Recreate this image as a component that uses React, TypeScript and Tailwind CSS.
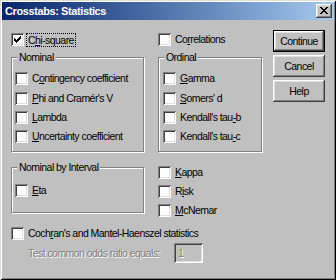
import React from "react";

const FONT = "font-['Liberation_Sans',Arial,sans-serif]";
const TXT = "text-[10.5px] tracking-[-0.55px]";

function Box({ checked }: { checked?: boolean }) {
  return (
    <span className="relative block w-[13px] h-[13px] shrink-0 bg-white shadow-[inset_1px_1px_0_#808080,inset_-1px_-1px_0_#ffffff,inset_2px_2px_0_#404040,inset_-2px_-2px_0_#dfdfdf]">
      {checked && (
        <svg
          className="absolute left-[3px] top-[3px]"
          width="7"
          height="7"
          viewBox="0 0 7 7"
          shapeRendering="crispEdges"
        >
          <path
            d="M6 0h1v1h-1z M5 1h2v1h-2z M0 2h1v1h-1z M4 2h3v1h-3z M0 3h2v1h-2z M3 3h3v1h-3z M0 4h5v1h-5z M1 5h3v1h-3z M2 6h1v1h-1z"
            fill="#000"
          />
        </svg>
      )}
    </span>
  );
}

function Mn({ text, u }: { text: string; u: number }) {
  if (u < 0) return <>{text}</>;
  return (
    <>
      {text.slice(0, u)}
      <u className="underline underline-offset-[1px]">{text[u]}</u>
      {text.slice(u + 1)}
    </>
  );
}

function CB({
  text,
  u,
  checked,
  focus,
}: {
  text: string;
  u: number;
  checked?: boolean;
  focus?: boolean;
}) {
  return (
    <div className="flex items-center h-[13px]">
      <Box checked={checked} />
      {focus ? (
        <span className="ml-[2px] px-[1px] h-[14px] flex items-center border border-dotted border-black text-[10.5px] tracking-[-0.55px] leading-[12px] whitespace-nowrap">
          <Mn text={text} u={u} />
        </span>
      ) : (
        <span className="ml-[4px] text-[10.5px] tracking-[-0.55px] leading-[13px] whitespace-nowrap">
          <Mn text={text} u={u} />
        </span>
      )}
    </div>
  );
}

function Group({
  title,
  className,
  children,
}: {
  title: string;
  className: string;
  children: React.ReactNode;
}) {
  return (
    <div
      className={
        "relative border border-[#808080] shadow-[inset_1px_1px_0_#ffffff,1px_1px_0_#ffffff] " +
        className
      }
    >
      <span className="absolute left-[5px] top-[-7px] px-[2px] bg-[#c0c0c0] text-[10.5px] tracking-[-0.55px] leading-[13px] whitespace-nowrap">
        {title}
      </span>
      {children}
    </div>
  );
}

function Btn({ label, def }: { label: string; def?: boolean }) {
  return (
    <div
      className={
        "w-[52px] h-[22px] flex items-center justify-center text-[10.5px] tracking-[-0.55px] leading-[13px] bg-[#c0c0c0] " +
        (def
          ? "border border-black shadow-[inset_-1px_-1px_0_#404040,inset_1px_1px_0_#ffffff,inset_-2px_-2px_0_#808080,inset_2px_2px_0_#dfdfdf]"
          : "shadow-[inset_-1px_-1px_0_#404040,inset_1px_1px_0_#ffffff,inset_-2px_-2px_0_#808080,inset_2px_2px_0_#dfdfdf]")
      }
    >
      {label}
    </div>
  );
}

export default function App() {
  return (
    <div
      className={
        "w-[336px] h-[280px] bg-[#c0c0c0] text-black p-[2px] overflow-hidden shadow-[inset_1px_1px_0_#dfdfdf,inset_-1px_-1px_0_#000000,inset_2px_2px_0_#ffffff,inset_-2px_-2px_0_#808080] " +
        FONT
      }
    >
      {/* Title bar */}
      <div className="h-[18px] flex items-center justify-between pl-[3px] pr-[2px] bg-gradient-to-r from-[#0a246a] to-[#a6caf0]">
        <span className="text-white font-bold text-[11px] leading-[13px] tracking-[-0.4px]">
          Crosstabs: Statistics
        </span>
        <div className="w-[16px] h-[14px] relative bg-[#c0c0c0] shadow-[inset_-1px_-1px_0_#404040,inset_1px_1px_0_#ffffff,inset_-2px_-2px_0_#808080,inset_2px_2px_0_#dfdfdf]">
          <svg
            className="absolute left-[4px] top-[3px]"
            width="8"
            height="7"
            viewBox="0 0 8 7"
            shapeRendering="crispEdges"
          >
            <path
              d="M0 0h2v1h-2z M6 0h2v1h-2z M1 1h2v1h-2z M5 1h2v1h-2z M2 2h4v1h-4z M3 3h2v1h-2z M2 4h4v1h-4z M1 5h2v1h-2z M5 5h2v1h-2z M0 6h2v1h-2z M6 6h2v1h-2z"
              fill="#000"
            />
          </svg>
        </div>
      </div>

      {/* Client */}
      <div className="flex pl-[9px] pt-[10px]">
        {/* Left column */}
        <div className="w-[251px] pt-[3px] flex flex-col">
          <div className="flex">
            <div className="w-[147px]">
              <CB text="Chi-square" u={1} checked focus />
            </div>
            <CB text="Correlations" u={2} />
          </div>

          <div className="flex mt-[11px]">
            <Group title="Nominal" className="w-[133px] h-[95px] pl-[3px] pt-[14px]">
              <div className="flex flex-col">
                <CB text="Contingency coefficient" u={1} />
                <div className="mt-[7px]">
                  <CB text="Phi and Cramér's V" u={0} />
                </div>
                <div className="mt-[6px]">
                  <CB text="Lambda" u={0} />
                </div>
                <div className="mt-[6px]">
                  <CB text="Uncertainty coefficient" u={0} />
                </div>
              </div>
            </Group>
            <Group title="Ordinal" className="ml-[14px] w-[104px] h-[95px] pl-[4px] pt-[14px]">
              <div className="flex flex-col">
                <CB text="Gamma" u={0} />
                <div className="mt-[7px]">
                  <CB text="Somers' d" u={0} />
                </div>
                <div className="mt-[6px]">
                  <CB text="Kendall's tau-b" u={13} />
                </div>
                <div className="mt-[6px]">
                  <CB text="Kendall's tau-c" u={13} />
                </div>
              </div>
            </Group>
          </div>

          <div className="flex items-start h-[61px]">
            <Group title="Nominal by Interval" className="mt-[15px] w-[133px] h-[46px] pl-[3px] pt-[16px]">
              <CB text="Eta" u={0} />
            </Group>
            <div className="ml-[14px] mt-[14px] flex flex-col">
              <CB text="Kappa" u={0} />
              <div className="mt-[6px]">
                <CB text="Risk" u={1} />
              </div>
              <div className="mt-[6px]">
                <CB text="McNemar" u={0} />
              </div>
            </div>
          </div>

          <div className="mt-[14px]">
            <CB text="Cochran's and Mantel-Haenszel statistics" u={4} />
          </div>

          <div className="mt-[3px] flex items-center">
            <span className="ml-[17px] w-[146px] text-[10.5px] tracking-[-0.55px] leading-[13px] text-[#808080] [text-shadow:1px_1px_0_#ffffff] whitespace-nowrap">
              Test common odds ratio equals:
            </span>
            <div className="w-[29px] h-[20px] flex items-center pl-[4px] text-[10.5px] leading-[13px] text-[#808080] [text-shadow:1px_1px_0_#ffffff] bg-[#c0c0c0] shadow-[inset_1px_1px_0_#808080,inset_-1px_-1px_0_#ffffff,inset_2px_2px_0_#404040,inset_-2px_-2px_0_#dfdfdf]">
              1
            </div>
          </div>
        </div>

        {/* Buttons */}
        <div className="ml-[11px] flex flex-col gap-[3px]">
          <Btn label="Continue" def />
          <Btn label="Cancel" />
          <Btn label="Help" />
        </div>
      </div>
    </div>
  );
}
